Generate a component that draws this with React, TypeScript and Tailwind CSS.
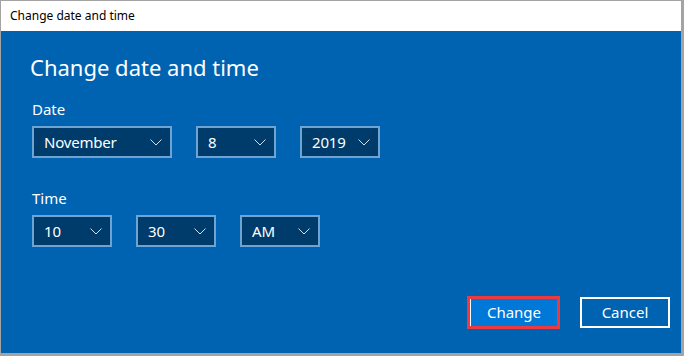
import React from 'react';

interface SelectProps {
  value: string;
  width: string;
}

const Chevron: React.FC = () => (
  <svg width="12" height="7" viewBox="0 0 12 7" className="shrink-0">
    <path d="M0.5 0.5 L6 6 L11.5 0.5" fill="none" stroke="#d4dfea" strokeWidth="1" />
  </svg>
);

const Select: React.FC<SelectProps> = ({ value, width }) => (
  <div
    className={`${width} h-8 flex items-center justify-between pl-[10px] pr-[8px] bg-[#003c6b] border-2 border-[#6fa4d2] text-white text-[15px] tracking-[-0.2px]`}
  >
    <span>{value}</span>
    <Chevron />
  </div>
);

export default function App() {
  return (
    <div
      className="w-[684px] h-[356px] bg-[#a3a3a3] pt-px pl-px pr-[3px] pb-[3px] flex flex-col"
      style={{ fontFamily: '"Noto Sans", "Open Sans", sans-serif' }}
    >
      <div className="h-[30px] bg-white flex items-center pl-[9px] text-[12px] text-black">
        Change date and time
      </div>
      <div className="flex-1 bg-[#0063b1] flex flex-col pl-[31px] pr-[11px] pb-[24px] text-white">
        <h1 className="mt-[20px] -ml-[2px] text-[22px] leading-[32px] font-normal">Change date and time</h1>
        <div className="mt-[16px] text-[15px] leading-[20px]">Date</div>
        <div className="mt-[7px] flex gap-6">
          <Select value="November" width="w-[140px]" />
          <Select value="8" width="w-[80px]" />
          <Select value="2019" width="w-[80px]" />
        </div>
        <div className="mt-[30px] text-[15px] leading-[20px]">Time</div>
        <div className="mt-[7px] flex gap-6">
          <Select value="10" width="w-[80px]" />
          <Select value="30" width="w-[80px]" />
          <Select value="AM" width="w-[80px]" />
        </div>
        <div className="mt-auto flex justify-end items-center gap-[20px]">
          <div className="border-[3px] border-[#ec3a40]">
            <div className="w-[87px] h-[27px] bg-[#0078d7] border-l border-white flex items-center justify-center text-[15px]">
              Change
            </div>
          </div>
          <div className="w-[90px] h-[31px] border-2 border-white flex items-center justify-center text-[15px]">
            Cancel
          </div>
        </div>
      </div>
    </div>
  );
}
